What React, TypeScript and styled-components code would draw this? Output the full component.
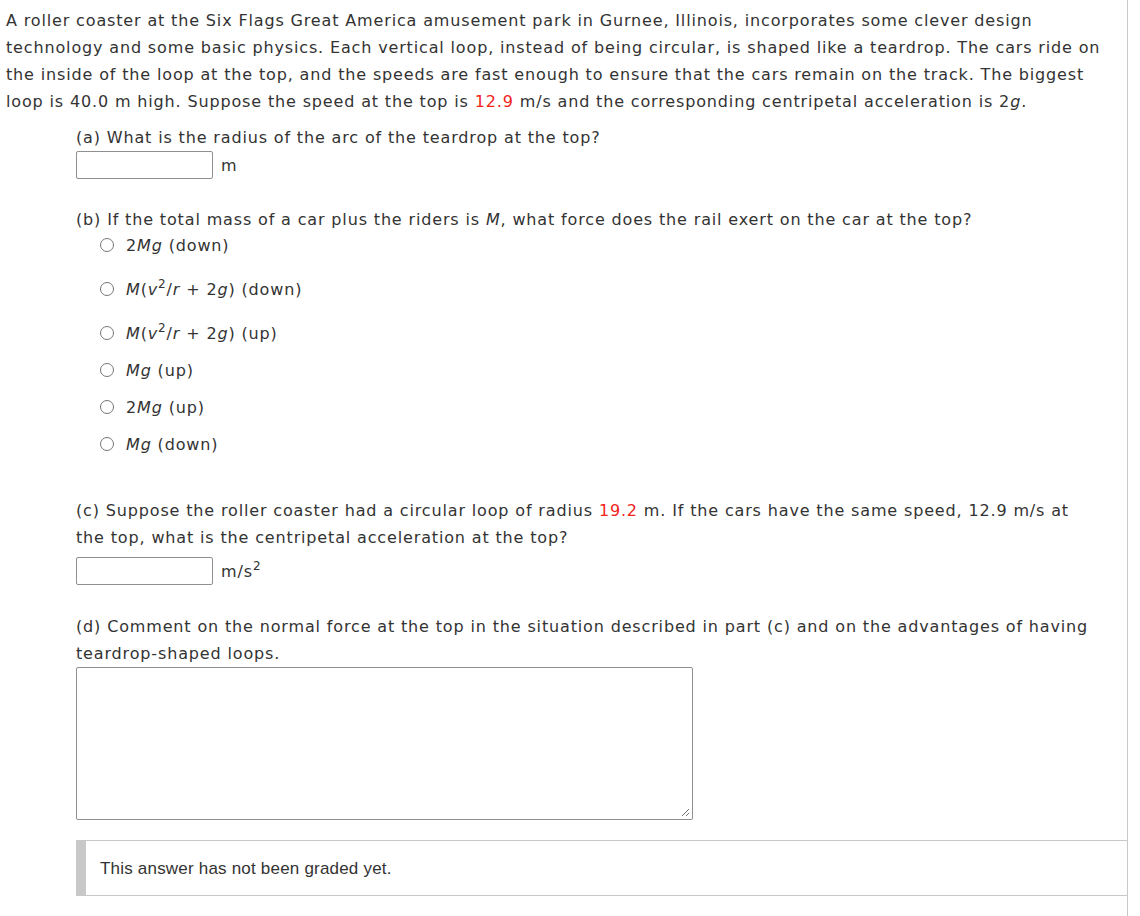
import React from "react";
import styled, { createGlobalStyle } from "styled-components";

const Global = createGlobalStyle`
  html, body { margin: 0; padding: 0; background: #fff; }
  body { font-family: Verdana, "DejaVu Sans", sans-serif; color: #333; }
`;

const Page = styled.div`
  width: 1128px;
  min-height: 916px;
  box-sizing: border-box;
  padding: 7px 26px 0 6px;
  border-right: 1px solid #c8c8c8;
  font-size: 16px;
  line-height: 27px;
  letter-spacing: 0.85px;
`;

const Intro = styled.p`
  margin: 0;
`;

const Red = styled.span`
  color: #f2231b;
`;

const Part = styled.div<{ $top: number }>`
  margin: ${(p) => p.$top}px 0 0 70px;
`;

const Question = styled.div`
  margin: 0;
`;

const AnswerRow = styled.div`
  display: flex;
  align-items: flex-end;
  gap: 8px;
`;

const NumberBox = styled.div`
  width: 137px;
  height: 28px;
  box-sizing: border-box;
  border: 1px solid #8f8f8f;
  border-radius: 2px;
  background: #fff;
`;

const Unit = styled.span`
  line-height: 27px;
`;

const Options = styled.div`
  display: flex;
  flex-direction: column;
  gap: 10px;
  padding-left: 24px;
  margin-top: -1px;
`;

const Option = styled.label`
  display: flex;
  align-items: baseline;
  gap: 12px;
`;

const Radio = styled.span`
  display: inline-block;
  flex: none;
  width: 14px;
  height: 14px;
  box-sizing: border-box;
  border: 1.5px solid #767676;
  border-radius: 50%;
  align-self: flex-end;
  margin-bottom: 7px;
`;

const Sup = styled.sup`
  font-size: 12px;
  vertical-align: 7px;
  line-height: 31px;
`;

const TextBox = styled.div`
  position: relative;
  width: 617px;
  height: 153px;
  box-sizing: border-box;
  border: 1px solid #8f8f8f;
  border-radius: 2px;
`;

const Grip = styled.svg`
  position: absolute;
  right: 2px;
  bottom: 2px;
`;

const Graded = styled.div`
  margin: 20px -26px 0 70px;
  height: 56px;
  box-sizing: border-box;
  border-top: 1px solid #c8c8c8;
  border-bottom: 1px solid #c8c8c8;
  border-left: 10px solid #c8c8c8;
  display: flex;
  align-items: center;
  padding-left: 14px;
  font-family: "Liberation Sans", Arial, sans-serif;
  font-size: 17px;
  letter-spacing: 0.2px;
  color: #333;
`;

export default function App() {
  return (
    <>
      <Global />
      <Page>
        <Intro>
          A roller coaster at the Six Flags Great America amusement park in Gurnee, Illinois,
          incorporates some clever design technology and some basic physics. Each vertical loop,
          instead of being circular, is shaped like a teardrop. The cars ride on the inside of the
          loop at the top, and the speeds are fast enough to ensure that the cars remain on the
          track. The biggest loop is 40.0 m high. Suppose the speed at the top is <Red>12.9</Red> m/s
          and the corresponding centripetal acceleration is 2<i>g</i>.
        </Intro>

        <Part $top={9}>
          <Question>(a) What is the radius of the arc of the teardrop at the top?</Question>
          <AnswerRow>
            <NumberBox />
            <Unit>m</Unit>
          </AnswerRow>
        </Part>

        <Part $top={27}>
          <Question>
            (b) If the total mass of a car plus the riders is <i>M</i>, what force does the rail
            exert on the car at the top?
          </Question>
          <Options>
            <Option>
              <Radio />
              <span>
                2<i>Mg</i> (down)
              </span>
            </Option>
            <Option>
              <Radio />
              <span>
                <i>M</i>(<i>v</i>
                <Sup>2</Sup>/<i>r</i> + 2<i>g</i>) (down)
              </span>
            </Option>
            <Option>
              <Radio />
              <span>
                <i>M</i>(<i>v</i>
                <Sup>2</Sup>/<i>r</i> + 2<i>g</i>) (up)
              </span>
            </Option>
            <Option>
              <Radio />
              <span>
                <i>Mg</i> (up)
              </span>
            </Option>
            <Option>
              <Radio />
              <span>
                2<i>Mg</i> (up)
              </span>
            </Option>
            <Option>
              <Radio />
              <span>
                <i>Mg</i> (down)
              </span>
            </Option>
          </Options>
        </Part>

        <Part $top={39}>
          <Question>
            (c) Suppose the roller coaster had a circular loop of radius <Red>19.2</Red> m. If the
            cars have the same speed, 12.9 m/s at the top, what is the centripetal acceleration at
            the top?
          </Question>
          <AnswerRow>
            <NumberBox />
            <Unit>
              m/s<Sup>2</Sup>
            </Unit>
          </AnswerRow>
        </Part>

        <Part $top={28}>
          <Question>
            (d) Comment on the normal force at the top in the situation described in part (c) and
            on the advantages of having teardrop-shaped loops.
          </Question>
          <TextBox>
            <Grip width="10" height="10" viewBox="0 0 10 10">
              <path d="M9 2 L2 9 M9 6 L6 9" stroke="#777" strokeWidth="1" fill="none" />
            </Grip>
          </TextBox>
        </Part>

        <Graded>This answer has not been graded yet.</Graded>
      </Page>
    </>
  );
}
